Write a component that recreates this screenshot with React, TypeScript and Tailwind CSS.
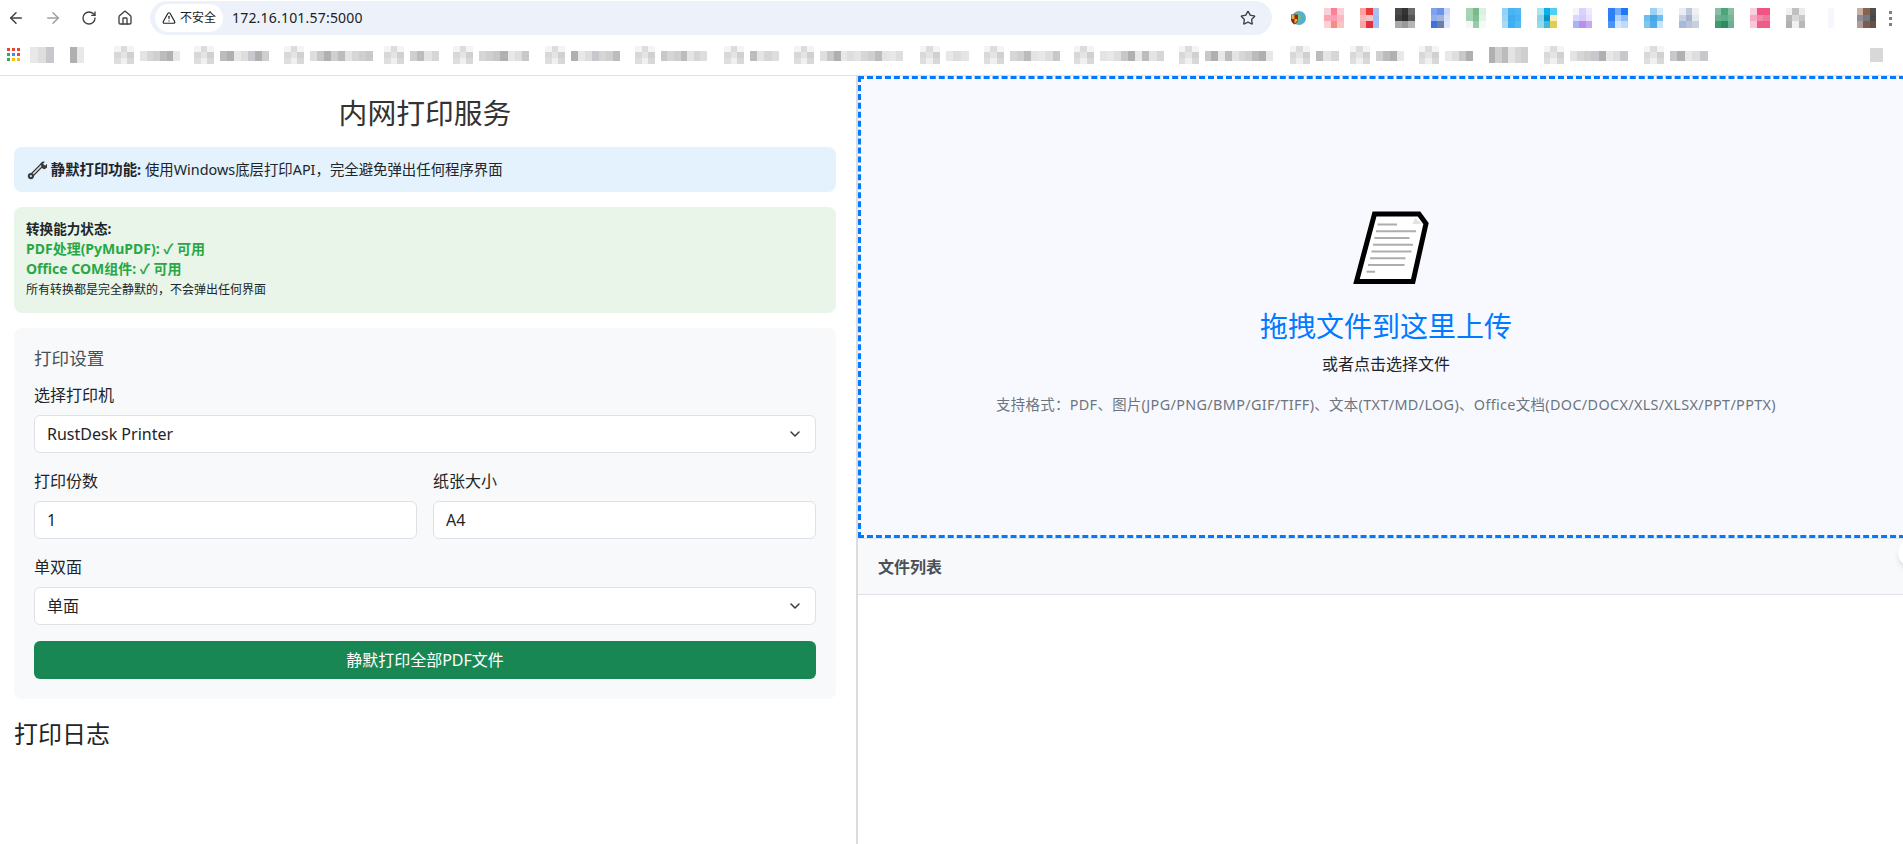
import { ArrowLeft, ArrowRight, ChevronDown, House, RotateCw, Star, TriangleAlert } from 'lucide-react';
import { ReactNode } from 'react';

const COMMA = '\uFF0C';
const COLON = '\uFF1A';

const BOOKMARKS = [
  [30, 54], [70, 84], [114, 180], [194, 269], [284, 373], [384, 439], [453, 529], [545, 620], [635, 707],
  [724, 779], [794, 903], [920, 969], [984, 1060], [1074, 1164], [1179, 1273], [1290, 1339], [1350, 1404],
  [1419, 1473], [1489, 1528], [1544, 1628], [1644, 1708],
];

const EXTENSIONS = [
  ['#fbcfd6', '#fb7f96', '#fbcfd6', '#fba6b4', '#fb9fb0', '#fbb8c4', '#fbd0d0', '#f88a8a', '#fbc4c4'],
  ['#f9a0a0', '#ea3a3a', '#a9c0f5', '#f9b8b8', '#f3c4c4', '#a0bdf8', '#f4a4a4', '#e62e3c', '#a4c0f8'],
  ['#4a4a4a', '#333333', '#6b6b6b', '#3f3f3f', '#2e2e2e', '#555555', '#a9a9a9', '#999999', '#b5b5b5'],
  ['#7ea3ee', '#6b93e8', '#c8d8f8', '#8fb0f0', '#a4b4d8', '#d6e2fa', '#3a72e0', '#6d7ea8', '#dde6fa'],
  ['#a8d4b4', '#78bc8c', '#dcefe2', '#a4d2b2', '#80c094', '#e4f3e8', '#f2f9f4', '#98cca8', '#f4faf6'],
  ['#94d0f8', '#48b4f4', '#50b8f6', '#9cd4f8', '#40acf0', '#48b2f4', '#a8daf8', '#3cb0f0', '#54baf4'],
  ['#a8e4f4', '#0cb0e8', '#50d0f0', '#88d4ec', '#0890c8', '#f4f0c0', '#90dcec', '#40b8d8', '#e4cc50'],
  ['#f4f4fe', '#dcd0fc', '#f0e8fe', '#d8d8fc', '#d8c8fc', '#e8e0fe', '#a8b4f4', '#b890ec', '#c8a8f0'],
  ['#2c80f4', '#70acf8', '#1c78f4', '#2c80f4', '#b4d4fc', '#8cbcf8', '#4c94f4', '#d4e6fc', '#c0dafc'],
  ['#ffffff', '#9cd0f4', '#d4ecfa', '#70bcec', '#48a8e4', '#70bcec', '#80c4f0', '#50acec', '#c8e4f8'],
  ['#e8ecf4', '#c0c8dc', '#eef0f6', '#c8d0e4', '#a8b4cc', '#e4e8f0', '#a8b8d8', '#b8c4dc', '#c8d0e0'],
  ['#84c0a4', '#4ca47c', '#84c0a4', '#68b08c', '#60ac88', '#74b898', '#3c9c70', '#2c8c60', '#6cb090'],
  ['#f8d0dc', '#f05484', '#f05484', '#f8a8c0', '#f088a8', '#f078a0', '#f8c8d8', '#f05c88', '#f05c88'],
  ['#f0f0f0', '#c0c0c0', '#ececec', '#b8b8b8', '#d8d8d8', '#c8c8c8', '#b0b0b0', '#f0f0f0', '#b8b8b8'],
  ['#ffffff', '#f6f8fe', '#ffffff', '#ffffff', '#f4f7fe', '#ffffff', '#ffffff', '#f6f8fe', '#ffffff'],
  ['#c8b0a4', '#84644c', '#504c48', '#908c94', '#787880', '#484848', '#b09c98', '#7c5c50', '#685048'],
];

const FAVICON = ['#f4f4f4', '#dcdcdc', '#f4f4f4', '#d8d8d8', '#e4e4e4', '#d0d0d0', '#dedede', '#f0f0f0', '#d8d8d8'];

const shade = (seed: number): string => {
  const greys = ['#e8e8e8', '#cfcfcf', '#dedede', '#bcbcbc', '#c8c8cc', '#e4e4e4', '#b0b0b0', '#d6d6d6'];
  return greys[(seed * 7 + (seed % 5) * 3) % greys.length];
};

const Field = ({ label, children }: { label: string; children: ReactNode }) => (
  <div className="mb-4">
    <label className="mb-2 block text-base leading-6 text-[#212529]">{label}</label>
    {children}
  </div>
);

const Select = ({ value }: { value: string }) => (
  <div className="relative">
    <select
      defaultValue={value}
      className="h-[38px] w-full appearance-none rounded-md border border-[#dee2e6] bg-white px-3 text-base text-[#212529] outline-none"
    >
      <option>{value}</option>
    </select>
    <ChevronDown className="pointer-events-none absolute right-[13px] top-[11px] h-4 w-4 text-[#343a40]" strokeWidth={2.2} />
  </div>
);

const TextInput = ({ value }: { value: string }) => (
  <input
    defaultValue={value}
    className="h-[38px] w-full rounded-md border border-[#dee2e6] bg-white px-3 text-base text-[#212529] outline-none"
  />
);

const Toolbar = () => (
  <div className="flex h-[36px] items-center">
    <div className="flex w-[150px] shrink-0 items-center pl-[7px] text-[#3c4043]">
      <ArrowLeft className="h-[18px] w-[18px]" strokeWidth={2} />
      <ArrowRight className="ml-[19px] h-[18px] w-[18px] text-[#9aa0a6]" strokeWidth={2} />
      <RotateCw className="ml-[19px] h-4 w-4" strokeWidth={2} />
      <House className="ml-[20px] h-4 w-4" strokeWidth={2} />
    </div>
    <div className="flex h-[34px] w-[1122px] shrink-0 items-center rounded-full bg-[#edf2fa] pl-[5px] pr-[16px]">
      <div className="flex h-[28px] w-[68px] items-center justify-center gap-1 rounded-full bg-white text-xs text-[#202124]">
        <TriangleAlert className="h-[14px] w-[14px]" strokeWidth={2} />
        不安全
      </div>
      <span className="ml-[9px] text-sm tracking-[0.2px] text-[#202124]">172.16.101.57:5000</span>
      <Star className="ml-auto h-4 w-4 text-[#3c4043]" strokeWidth={2} />
    </div>
    <div className="flex items-center pl-[18px]">
      <svg viewBox="0 0 16 16" className="h-4 w-4 shrink-0">
        <circle cx="9" cy="8" r="7" fill="#55b0c8" />
        <path d="M6 3l5 3-2 5-3 1z" fill="#7cc070" />
        <path d="M1 4.500h7v5c0 2.500-2 4-3.500 5-1.500-1-3.500-2.500-3.500-5z" fill="#8a2a1a" />
        <path d="M1.500 5h3v4h-3z" fill="#e8b030" />
        <path d="M4.500 9h3c0 2-1.500 3.500-3 4.500z" fill="#e8b030" />
      </svg>
      <div className="ml-[18px] flex gap-[15.500px]">
        {EXTENSIONS.map((cells, i) => (
          <div key={i} className="grid h-[20px] w-[20px] shrink-0 grid-cols-3 blur-[0.4px]">
            {cells.map((c, j) => (
              <span key={j} style={{ backgroundColor: c }} />
            ))}
          </div>
        ))}
      </div>
    </div>
    <div className="ml-[12px] flex flex-col gap-[3px]">
      <span className="h-[3px] w-[3px] bg-[#808080]" />
      <span className="h-[3px] w-[3px] bg-[#808080]" />
      <span className="h-[3px] w-[3px] bg-[#808080]" />
    </div>
  </div>
);

const BookmarksBar = () => (
  <div className="flex h-[40px] items-center border-b border-[#e0e0e0] pb-[2px]">
    <div className="ml-[7px] grid h-[13px] w-[13px] shrink-0 grid-cols-3 gap-[2px]">
      {['#ea4335', '#ea4335', '#ea4335', '#34a853', '#4285f4', '#ea4335', '#34a853', '#fbbc05', '#fbbc05'].map((c, i) => (
        <span key={i} style={{ backgroundColor: c }} />
      ))}
    </div>
    {BOOKMARKS.map(([start, end], i) => {
      const prev = i === 0 ? 20 : BOOKMARKS[i - 1][1];
      const hasIcon = end - start > 40;
      const textWidth = end - start - (hasIcon ? 26 : 0);
      const cells = Math.max(1, Math.round(textWidth / 7));
      return (
        <div key={start} style={{ marginLeft: start - prev }} className="flex shrink-0 items-center gap-[6px] blur-[0.7px]">
          {hasIcon && (
            <div className="grid h-[18px] w-[20px] grid-cols-3">
              {FAVICON.map((c, j) => (
                <span key={j} style={{ backgroundColor: c }} />
              ))}
            </div>
          )}
          <div className={hasIcon ? 'mt-[3px] flex h-[10px]' : 'flex h-[16px]'}>
            {Array.from({ length: cells }, (_, j) => (
              <span key={j} className="h-full" style={{ width: textWidth / cells, backgroundColor: shade(i * 3 + j) }} />
            ))}
          </div>
        </div>
      );
    })}
    <div className="ml-[162px] h-[14px] w-[13px] shrink-0 bg-[#d8d8d8] blur-[0.7px]" />
  </div>
);

const Wrench = () => (
  <svg viewBox="0 0 18 18" className="inline-block h-5 w-5 shrink-0 align-[-5px]">
    <path d="M4 14L14 4" stroke="#2a2a2a" strokeWidth="3.600" />
    <path d="M4 14L14 4" stroke="#d8d8d8" strokeWidth="1.500" />
    <circle cx="3.500" cy="14.500" r="2.800" fill="#3a3a3a" />
    <circle cx="3.500" cy="14.500" r="1" fill="#dcdcdc" />
    <path d="M12.200 3.500a3 3 0 0 1 4-2l-1.700 1.700 0.800 1.400 1.500 0.400 1-1.700a3 3 0 0 1-4.200 4.200z" fill="#3a3a3a" />
  </svg>
);

const DocIcon = () => (
  <svg viewBox="0 0 76 74" className="ml-[9px] h-[74px] w-[76px]">
    <path d="M21.500 3H66l7 9.500L60 70.500H3.500z" fill="#fff" stroke="#000" strokeWidth="5" strokeLinejoin="miter" />
    <path d="M62 7l7 6-9.500 0z" fill="#e4e4e4" />
    <g stroke="#adadad" strokeWidth="2">
      <path d="M24.500 13.500H44" />
      <path d="M23 20.200H63" />
      <path d="M21.500 27H56.500" />
      <path d="M20 33.700H60" />
      <path d="M18.500 40.500H58.500" />
      <path d="M17 47.200H52.500" />
      <path d="M15 54H51.500" />
      <path d="M13.500 60.700H22" />
    </g>
  </svg>
);

const App = () => (
  <div className="relative flex h-screen w-full flex-col overflow-hidden bg-white font-['Noto_Sans','Noto_Sans_CJK_SC',sans-serif]">
    <Toolbar />
    <BookmarksBar />
    <div className="flex min-h-0 flex-1">
      <div className="w-[858px] shrink-0 border-r-2 border-[#dcdcdc] pl-[14px] pr-[20px] pt-5">
        <h1 className="mb-[17px] text-center text-[28.800px] leading-[34px] text-[#333]">内网打印服务</h1>
        <div className="mb-[15px] rounded-lg bg-[#e3f2fd] px-[13px] py-3 text-[14.400px] leading-[21px] text-[#212529]">
          <Wrench /> <strong className="font-bold">静默打印功能:</strong> 使用Windows底层打印API{COMMA}完全避免弹出任何程序界面
        </div>
        <div className="mb-[15px] h-[106px] rounded-lg bg-[#e8f5e8] px-3 py-3 text-[13.600px] leading-5 text-[#212529]">
          <div className="font-bold">转换能力状态:</div>
          <div className="text-sm font-bold text-[#28a745]">PDF处理(PyMuPDF): ✓ 可用</div>
          <div className="text-sm font-bold text-[#28a745]">Office COM组件: ✓ 可用</div>
          <div className="text-xs leading-[21px]">所有转换都是完全静默的{COMMA}不会弹出任何界面</div>
        </div>
        <div className="rounded-lg bg-[#f8f9fa] p-5">
          <h3 className="mb-[15px] text-[17.600px] leading-5 text-[#495057]">打印设置</h3>
          <Field label="选择打印机">
            <Select value="RustDesk Printer" />
          </Field>
          <div className="grid grid-cols-2 gap-4">
            <Field label="打印份数">
              <TextInput value="1" />
            </Field>
            <Field label="纸张大小">
              <TextInput value="A4" />
            </Field>
          </div>
          <Field label="单双面">
            <Select value="单面" />
          </Field>
          <button className="h-[38px] w-full rounded-md bg-[#198754] text-base text-white">静默打印全部PDF文件</button>
        </div>
        <h2 className="mt-5 text-2xl leading-[29px] text-[#212529]">打印日志</h2>
      </div>
      <div className="flex w-[1056px] shrink-0 flex-col">
        <div className="flex h-[462px] shrink-0 flex-col items-center justify-center border-[3px] border-dashed border-[#007bff] bg-[#f8f9ff] pt-3">
          <DocIcon />
          <div className="mt-[20px] text-[28px] leading-[42px] text-[#007bff]">拖拽文件到这里上传</div>
          <div className="mt-[5px] text-base leading-6 text-[#212529]">或者点击选择文件</div>
          <div className="mt-[18px] text-[14.400px] leading-[21px] tracking-[0.35px] text-[#6c757d]">
            支持格式{COLON}PDF、图片(JPG/PNG/BMP/GIF/TIFF)、文本(TXT/MD/LOG)、Office文档(DOC/DOCX/XLS/XLSX/PPT/PPTX)
          </div>
        </div>
        <div className="flex h-[57px] shrink-0 items-center border-y border-[#dee2e6] bg-[#f8f9fa] px-5 text-base font-semibold text-[#495057]">
          文件列表
        </div>
      </div>
    </div>
    <div className="absolute left-[1898px] top-[539px] h-7 w-7 rounded-full bg-white shadow-md" />
  </div>
);

export default App;
